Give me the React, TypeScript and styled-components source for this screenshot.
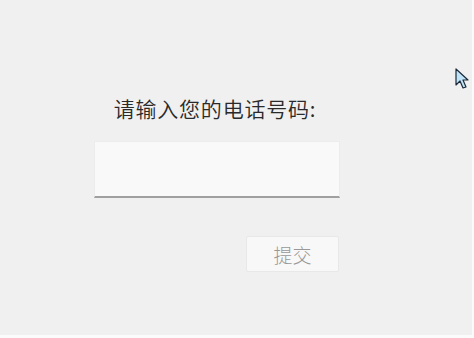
import React, { useState } from 'react';
import styled, { createGlobalStyle } from 'styled-components';

const GlobalStyle = createGlobalStyle`
    html, body {
        margin: 0;
        padding: 0;
        background: #fbfbfb;
    }
    * {
        box-sizing: border-box;
    }
`;

export function App() {
    const [phone, setPhone] = useState('');

    return (
        <>
            <GlobalStyle />
            <Window>
                <Form>
                    <Label>请输入您的电话号码:</Label>
                    <PhoneInput value={phone} onChange={(e) => setPhone(e.target.value)} />
                    <ButtonRow>
                        <SubmitButton disabled={!phone}>提交</SubmitButton>
                    </ButtonRow>
                </Form>
                <Cursor width="16" height="22" viewBox="0 0 16 22">
                    <path
                        d="M1 1 L1 17 L5 13 L8 20 L11 19 L8 12 L13 12 Z"
                        fill="#bfe3f7"
                        stroke="#1a2a3a"
                        strokeWidth="1.2"
                        strokeLinejoin="round"
                    />
                </Cursor>
            </Window>
        </>
    );
}

export default App;

const Window = styled.div`
    position: relative;
    width: 472px;
    height: 335px;
    background: #f0f0f0;
    padding: 94px 0 0 94px;
    font-family: "Noto Sans CJK SC", "Liberation Serif", serif;
`;

const Form = styled.div`
    width: 246px;
    display: flex;
    flex-direction: column;
`;

const Label = styled.div`
    font-size: 21px;
    line-height: 28px;
    letter-spacing: 0.8px;
    color: #2a2a2a;
    text-align: center;
    margin-right: 4px;
    font-weight: 350;
`;

const PhoneInput = styled.input`
    margin-top: 19px;
    height: 57px;
    width: 100%;
    background: #f9f9f9;
    border: 1px solid #ececec;
    border-bottom: 2px solid #a0a0a0;
    outline: none;
    font-size: 18px;
    padding: 0 10px;
    font-family: inherit;
`;

const ButtonRow = styled.div`
    display: flex;
    justify-content: flex-end;
    margin-top: 38px;
`;

const SubmitButton = styled.button`
    width: 93px;
    height: 36px;
    margin-right: 1px;
    background: #f8f8f8;
    border: 1px solid #e8e8e8;
    border-radius: 2px;
    color: #999;
    font-size: 19px;
    font-weight: 300;
    font-family: inherit;
    padding: 0;
`;

const Cursor = styled.svg`
    position: absolute;
    left: 455px;
    top: 68px;
`;
